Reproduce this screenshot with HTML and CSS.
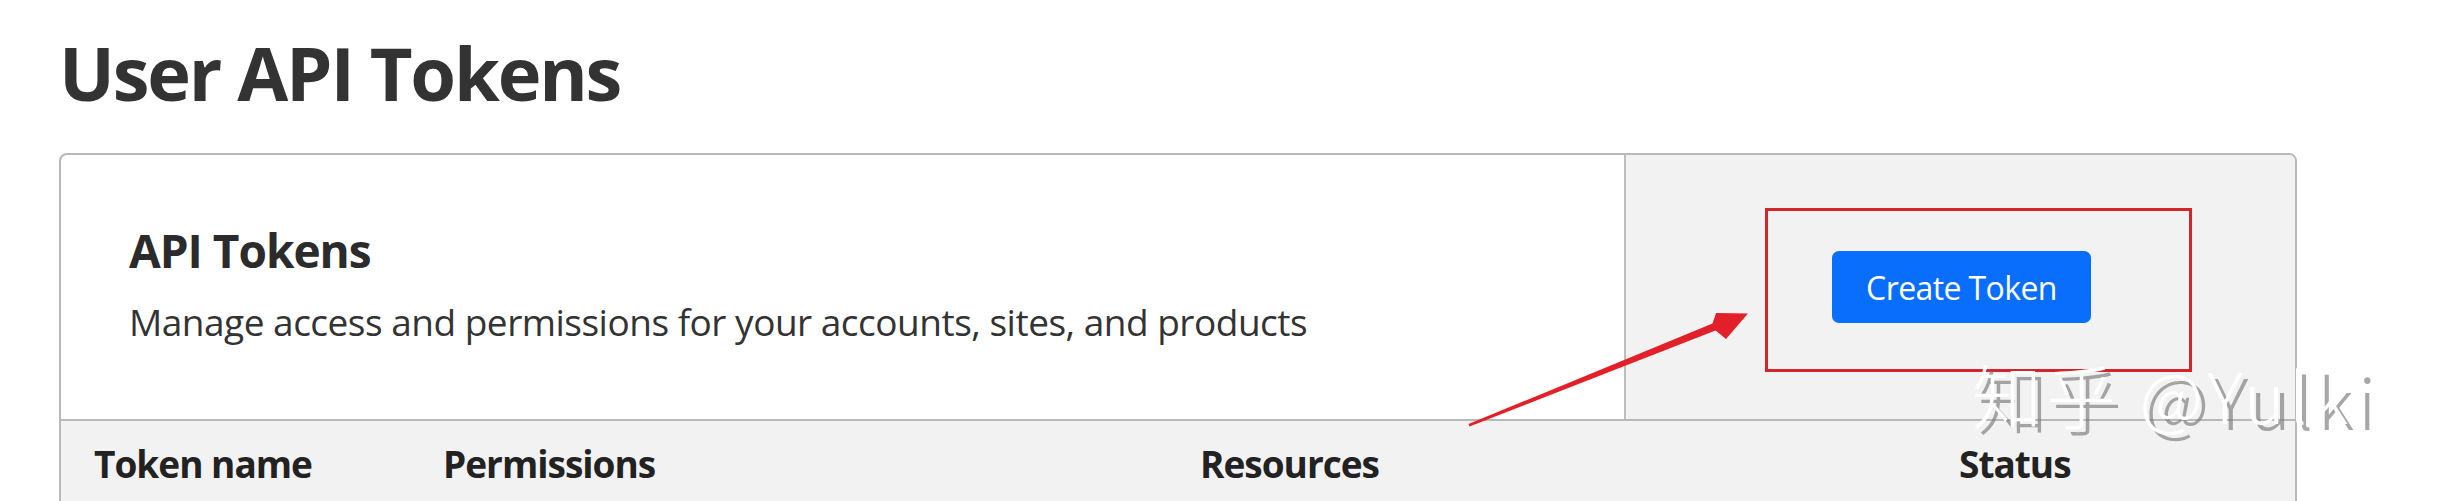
FILE: index.html
```html
<!DOCTYPE html>
<html lang="en">
<head>
<meta charset="utf-8">
<title>User API Tokens</title>
<link rel="stylesheet" href="styles.css">
</head>
<body>
<main class="page">
  <h1 class="page-title">User API Tokens</h1>
  <section class="card">
    <div class="card-header">
      <div class="card-intro">
        <h2 class="card-title">API Tokens</h2>
        <p class="card-desc">Manage access and permissions for your accounts, sites, and products</p>
      </div>
      <div class="card-action">
        <button class="btn-primary" type="button">Create Token</button>
      </div>
    </div>
    <div class="table-head">
      <div class="th">Token name</div>
      <div class="th">Permissions</div>
      <div class="th">Resources</div>
      <div class="th">Status</div>
    </div>
  </section>
</main>
<div class="annotations">
  <div class="highlight-box"></div>
  <svg class="arrow" width="2441" height="501" viewBox="0 0 2441 501">
    <polygon fill="#e3202a" points="1468.5,424 1712.5,323.5 1716,313 1748,313.5 1726,339 1715.5,330.5 1469.5,426.5"/>
  </svg>
  <div class="watermark">知乎 @Yulki</div>
</div>
</body>
</html>
```

FILE: styles.css
```css
html, body {
  margin: 0;
  padding: 0;
  background: #ffffff;
}

body {
  font-family: "Open Sans", "Noto Sans", "Liberation Sans", sans-serif;
  color: #333333;
  position: relative;
  width: 2441px;
  height: 501px;
  overflow: hidden;
}

.page {
  padding: 36px 0 0 59px;
}

.page-title {
  margin: 0 0 43px 0;
  font-size: 74px;
  line-height: 1;
  font-weight: 700;
  color: #333333;
  letter-spacing: -2.2px;
}

.card {
  width: 2238px;
  box-sizing: border-box;
  border: 2px solid #b9b9b9;
  border-radius: 8px;
  overflow: hidden;
}

.card-header {
  display: grid;
  grid-template-columns: 1fr 671px;
  height: 264px;
  border-bottom: 2px solid #b9b9b9;
}

.card-intro {
  padding: 72px 0 0 68px;
}

.card-title {
  margin: 0;
  font-size: 46px;
  line-height: 1;
  font-weight: 700;
  color: #2b2b2b;
  letter-spacing: -1px;
}

.card-desc {
  margin: 30px 0 0 0;
  font-size: 37px;
  line-height: 1;
  font-weight: 400;
  color: #333333;
  letter-spacing: -0.5px;
}

.card-action {
  background: #f2f2f2;
  border-left: 2px solid #bdbdbd;
  display: flex;
  align-items: center;
  justify-content: center;
}

.btn-primary {
  width: 259px;
  height: 72px;
  border: none;
  border-radius: 7px;
  background: #0a6efc;
  color: #ffffff;
  font-family: "Open Sans", "Noto Sans", sans-serif;
  font-size: 32px;
  font-weight: 400;
  letter-spacing: -0.6px;
  padding: 0;
  margin-left: 2px;
}

.table-head {
  display: grid;
  grid-template-columns: 349px 757px 759px 1fr;
  background: #f2f2f2;
  height: 100px;
}

.th {
  padding: 24px 0 0 33px;
  font-size: 37px;
  line-height: 1;
  font-weight: 700;
  color: #222222;
  letter-spacing: -1px;
}

.annotations {
  position: absolute;
  left: 0;
  top: 0;
  width: 2441px;
  height: 501px;
  pointer-events: none;
}

.highlight-box {
  position: absolute;
  left: 1765px;
  top: 208px;
  width: 427px;
  height: 164px;
  box-sizing: border-box;
  border: 3px solid #d4242b;
}

.arrow {
  position: absolute;
  left: 0;
  top: 0;
}

.watermark {
  position: absolute;
  left: 1972px;
  top: 352px;
  font-family: "Noto Sans CJK SC", "Noto Sans", sans-serif;
  font-size: 70px;
  line-height: 1.2;
  font-weight: 300;
  letter-spacing: 4px;
  color: #ffffff;
  white-space: nowrap;
  text-shadow: 6px 6px 0 rgba(120, 120, 120, 0.65);
}
```
